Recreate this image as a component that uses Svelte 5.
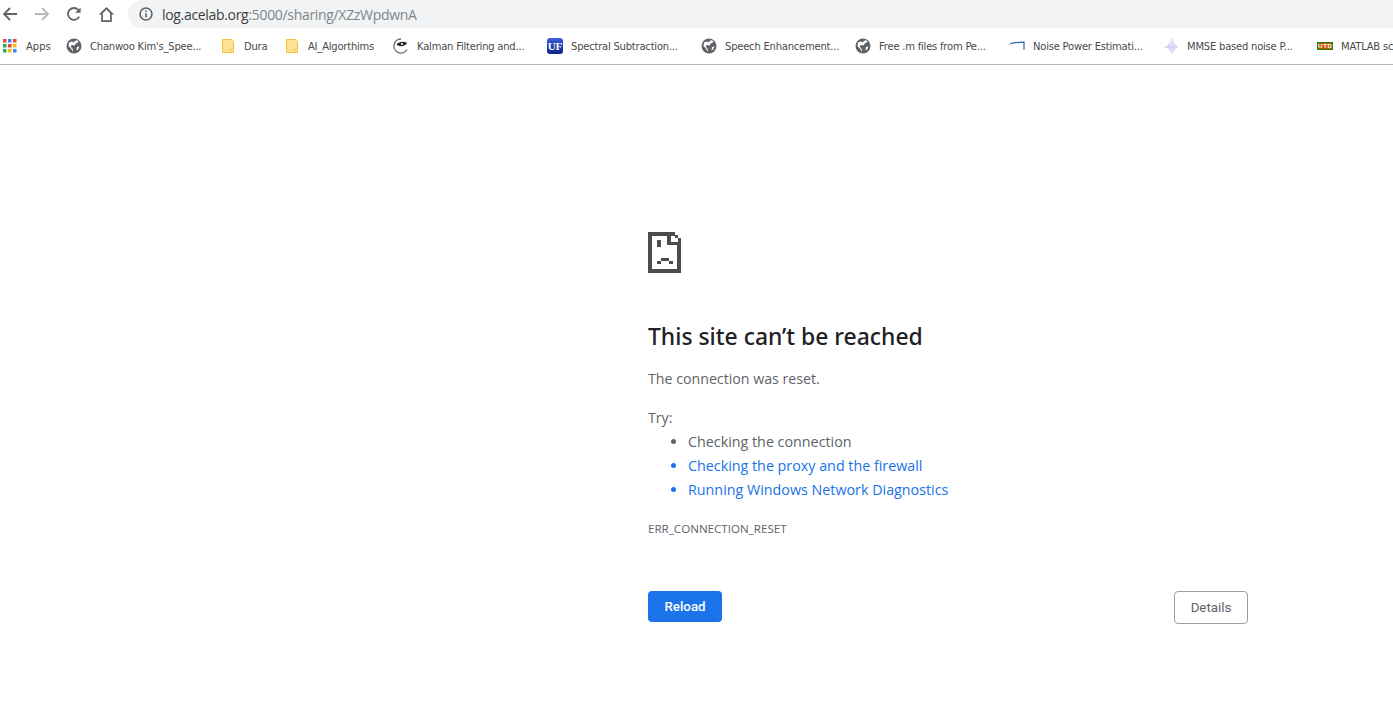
<script>
  const marks = [
    { icon: 'globe', label: "Chanwoo Kim's_Spee...", w: 154 },
    { icon: 'folder', label: 'Dura', w: 64 },
    { icon: 'folder', label: 'AI_Algorthims', w: 109 },
    { icon: 'eye', label: 'Kalman Filtering and...', w: 154 },
    { icon: 'uf', label: 'Spectral Subtraction...', w: 154 },
    { icon: 'globe', label: 'Speech Enhancement...', w: 154 },
    { icon: 'globe', label: 'Free .m files from Pe...', w: 154 },
    { icon: 'line', label: 'Noise Power Estimati...', w: 154 },
    { icon: 'wave', label: 'MMSE based noise P...', w: 154 },
    { icon: 'utd', label: 'MATLAB scripts', w: 100 }
  ];
</script>

<div class="browser">
  <header class="toolbar">
    <div class="navs">
      <svg class="nav back" viewBox="0 0 16 16"><path d="M15 8H2.500M8 2L2 8l6 6" fill="none" stroke="#5f6368" stroke-width="1.800"/></svg>
      <svg class="nav fwd" viewBox="0 0 16 16"><path d="M1 8h12.500M8 2l6 6-6 6" fill="none" stroke="#b6b8ba" stroke-width="1.800"/></svg>
      <svg class="nav reload" viewBox="0 0 16 16"><path d="M13.200 10.600A5.900 5.900 0 1 1 12.400 4" fill="none" stroke="#5f6368" stroke-width="1.800"/><path d="M14.600 1.400v5.400H9.200z" fill="#5f6368"/></svg>
      <svg class="nav home" viewBox="0 0 16 16"><path d="M8 1L.8 8H3v7h10V8h2.200zM8 3.400l3.400 3.400v6.600H4.600V6.800z" fill="#5f6368" fill-rule="evenodd"/></svg>
    </div>
    <div class="omnibox">
      <svg class="info" viewBox="0 0 16 16"><circle cx="8" cy="8" r="6.800" fill="none" stroke="#5f6368" stroke-width="1.800"/><path d="M7.100 7h1.800v4.800H7.100zM7.100 3.900h1.800v1.800H7.100z" fill="#5f6368"/></svg>
      <span class="url">log.acelab.org<span class="dim">:5000/sharing/XZzWpdwnA</span></span>
    </div>
  </header>

  <nav class="bookmarks">
    <div class="apps">
      <svg class="fav" viewBox="0 0 14 14">
        {#each [0, 5, 10] as y, r}
          {#each [0, 5, 10] as x, c}
            <rect x={x} y={y} width="3.500" height="3.500" fill={[['#e8453c','#4285f4','#e8453c'],['#34a853','#e8453c','#fbbc05'],['#34a853','#fbbc05','#4285f4']][r][c]}/>
          {/each}
        {/each}
      </svg>
      <span>Apps</span>
    </div>
    {#each marks as m}
      <div class="mark" style="width:{m.w}px">
        {#if m.icon === 'globe'}
          <svg class="fav" viewBox="0 0 16 16"><circle cx="8" cy="8" r="7.500" fill="#5f6368"/><path d="M3 4.500L6 3.500l1.500 1L9 3l2-1 1.500 2-3 1.700-.8 1.800-3-.5-1 1.500 2 2.500L7 14l-2-3.500-2.500-2.500zM11 9l2.500-.5-1.300 3-1.700.8z" fill="#fff"/></svg>
        {:else if m.icon === 'folder'}
          <svg class="folder" viewBox="0 0 12 14"><path d="M.5.500h9L11.500 3v10.500H.5z" fill="#fde293" stroke="#f0c53e"/><path d="M9 13.500v-3h2.500" fill="#fff" stroke="#f0c53e"/></svg>
        {:else if m.icon === 'eye'}
          <svg class="fav" viewBox="0 0 16 16"><path d="M8 1a7 7 0 1 0 6 10.500" fill="none" stroke="#666" stroke-width="1.300"/><path d="M3.500 6.500C6 3.500 11 3 14 5c-1 3-7 4.500-10.500 1.500z" fill="#222"/><circle cx="9" cy="6" r="1.100" fill="#fff"/></svg>
        {:else if m.icon === 'uf'}
          <span class="uf">UF</span>
        {:else if m.icon === 'line'}
          <svg class="fav" viewBox="0 0 16 16"><path d="M1 6C5 4.400 10 4.200 15 4.200V12" fill="none" stroke="#2d6cb0" stroke-width="1.200"/></svg>
        {:else if m.icon === 'wave'}
          <svg class="fav wave" viewBox="0 0 16 16"><path d="M1 9h14M4 7.500v3M5.500 6v5M7 3v10M8 5v9M9 0v16M10.200 3v11M11.500 5v8M13 7v4" stroke="#c4c4f0" stroke-width=".8" fill="none"/></svg>
        {:else}
          <span class="utd">UTD</span>
        {/if}
        <span class="mark-label">{m.label}</span>
      </div>
    {/each}
  </nav>

  <main class="page">
    <svg class="sad" viewBox="0 0 33 41" shape-rendering="crispEdges">
      <path fill="#4d4d4d" d="M0 0h27v4H4v33h25V13h4v28H0zM27 3h3v3h-3zM30 6h3v7h-3zM19 4h4v6h10v3H19zM9 8h4v7H9zM13 26h8v3h-8zM9 29h4v3H9zM21 29h4v3h-4z"/>
    </svg>
    <h1>This site can’t be reached</h1>
    <p class="reason">The connection was reset.</p>
    <p class="try">Try:</p>
    <ul>
      <li>Checking the connection</li>
      <li class="link">Checking the proxy and the firewall</li>
      <li class="link">Running Windows Network Diagnostics</li>
    </ul>
    <p class="code">ERR_CONNECTION_RESET</p>
    <div class="actions">
      <button class="reload-btn">Reload</button>
      <button class="details">Details</button>
    </div>
  </main>
</div>

<style>
  :global(body) { margin: 0; background: #fff; overflow: hidden; }
  .browser { height: 720px; font-family: "Open Sans", "Noto Sans", sans-serif; }
  .toolbar { height: 28px; display: flex; }
  .navs { width: 128px; display: flex; flex: none; position: relative; }
  .nav { width: 16px; height: 16px; margin-top: 6px; flex: none; }
  .back { margin-left: 2px; }
  .fwd { margin-left: 16px; }
  .reload { margin-left: 16px; }
  .home { margin-left: 16px; width: 17px; height: 17px; }
  .omnibox { flex: 1; background: #f1f3f4; border-radius: 14px 0 0 14px; display: flex; align-items: center; padding-left: 11px; }
  .info { width: 14px; height: 14px; margin-right: 9px; }
  .url { font-size: 14px; color: #3c4043; font-family: "Open Sans", sans-serif; letter-spacing: -.32px; }
  .dim { color: #80868b; }
  .bookmarks { height: 36px; border-bottom: 1px solid #b8b8b8; display: flex; align-items: center; padding-left: 3px; white-space: nowrap; overflow: hidden; font-family: "DejaVu Sans", sans-serif; font-size: 10px; color: #4a4a4a; }
  .apps { display: flex; align-items: center; width: 63px; flex: none; }
  .apps .fav { width: 14px; height: 14px; margin-right: 9px; }
  .mark { display: flex; align-items: center; flex: none; }
  .fav { width: 16px; height: 16px; flex: none; margin-right: 8px; }
  .folder { width: 12px; height: 14px; flex: none; margin: 0 10px 0 2px; }
  .mark-label { letter-spacing: -.22px; }
  .uf { width: 16px; height: 16px; margin-right: 8px; border-radius: 3px; background: linear-gradient(#3a62d8, #0c2288); color: #fff; font: bold 11px/16px "Liberation Serif", serif; text-align: center; flex: none; }
  .utd { width: 16px; height: 8px; margin-right: 8px; background: #c35a00; border: 1px solid #1f7a1f; box-sizing: border-box; color: #fff; font: bold 6px/6px "Liberation Sans", sans-serif; letter-spacing: .8px; text-align: center; flex: none; }
  .page { margin-left: 648px; width: 600px; color: #5f6368; font-size: 14.2px; position: relative; padding-top: 167px; }
  .sad { display: block; width: 33px; height: 41px; }
  h1 { margin: 49px 0 0; font-size: 22.9px; font-weight: 500; line-height: 30px; color: #202124; font-family: "Noto Sans", sans-serif; }
  .reason { margin: 17px 0 0; line-height: 20px; height: 20px; }
  .try { margin: 19px 0 0; line-height: 20px; height: 20px; }
  ul { margin: 2px 0 0; padding-left: 40px; line-height: 24px; font-size: 14.3px; }
  .link { color: #1a73e8; }
  .code { margin: 19px 0 0; font-size: 11.6px; line-height: 16px; text-transform: uppercase; }
  .actions { display: flex; justify-content: space-between; margin-top: 54px; }
  button { font-family: "Roboto", sans-serif; font-size: 13.3px; border-radius: 4px; height: 31px; box-sizing: border-box; }
  .reload-btn { width: 74px; background: #1a73e8; color: #fff; border: none; font-weight: 500; }
  .details { width: 74px; height: 33px; background: #fff; color: #5f6368; border: 1px solid #9aa0a6; }
</style>
